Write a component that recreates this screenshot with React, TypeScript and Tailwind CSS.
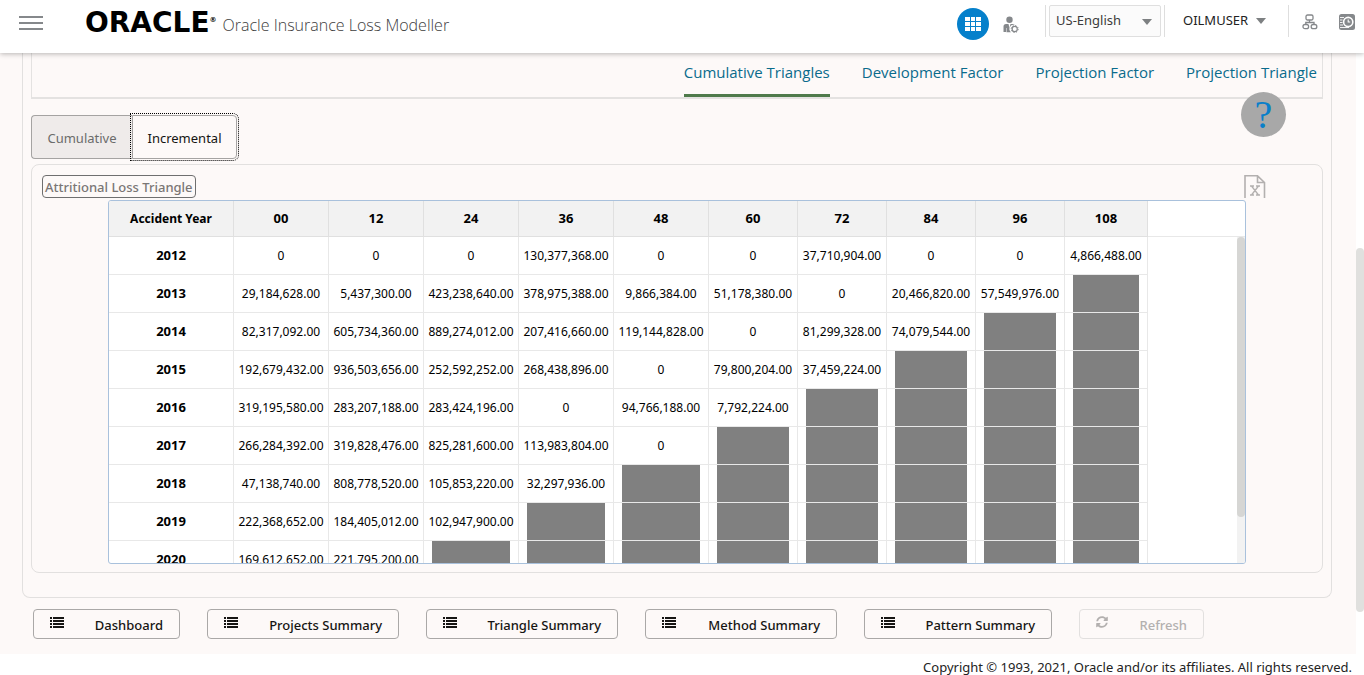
import { FaSyncAlt } from "react-icons/fa";

const tabs = ["Cumulative Triangles", "Development Factor", "Projection Factor", "Projection Triangle"];
const periods = ["00", "12", "24", "36", "48", "60", "72", "84", "96", "108"];

const rows = [
  { year: "2012", values: ["0", "0", "0", "130,377,368.00", "0", "0", "37,710,904.00", "0", "0", "4,866,488.00"] },
  { year: "2013", values: ["29,184,628.00", "5,437,300.00", "423,238,640.00", "378,975,388.00", "9,866,384.00", "51,178,380.00", "0", "20,466,820.00", "57,549,976.00"] },
  { year: "2014", values: ["82,317,092.00", "605,734,360.00", "889,274,012.00", "207,416,660.00", "119,144,828.00", "0", "81,299,328.00", "74,079,544.00"] },
  { year: "2015", values: ["192,679,432.00", "936,503,656.00", "252,592,252.00", "268,438,896.00", "0", "79,800,204.00", "37,459,224.00"] },
  { year: "2016", values: ["319,195,580.00", "283,207,188.00", "283,424,196.00", "0", "94,766,188.00", "7,792,224.00"] },
  { year: "2017", values: ["266,284,392.00", "319,828,476.00", "825,281,600.00", "113,983,804.00", "0"] },
  { year: "2018", values: ["47,138,740.00", "808,778,520.00", "105,853,220.00", "32,297,936.00"] },
  { year: "2019", values: ["222,368,652.00", "184,405,012.00", "102,947,900.00"] },
  { year: "2020", values: ["169,612,652.00", "221,795,200.00"] },
];

const actions = [
  { label: "Dashboard", width: "w-[147px]" },
  { label: "Projects Summary", width: "w-[192px]" },
  { label: "Triangle Summary", width: "w-[192px]" },
  { label: "Method Summary", width: "w-[192px]" },
  { label: "Pattern Summary", width: "w-[188px]" },
];

function Caret() {
  return (
    <svg width="10" height="6" viewBox="0 0 10 6" fill="#7d8082">
      <path d="M0 0h10L5 6z" />
    </svg>
  );
}

function ListIcon() {
  return (
    <svg width="14" height="11" viewBox="0 0 14 11" fill="#161513" className="mb-1">
      <path d="M0 0h2v2H0zM3 0h11v2H3zM0 3h2v2H0zM3 3h11v2H3zM0 6h2v2H0zM3 6h11v2H3zM0 9h2v2H0zM3 9h11v2H3z" />
    </svg>
  );
}

function UserIcon() {
  return (
    <svg width="16" height="18" viewBox="0 0 16 18" fill="#85888b">
      <circle cx="6.5" cy="3.7" r="3.2" />
      <path d="M0.5 16V10.5Q0.5 8 3 8H5.5L6.5 12L7.5 8H9.5Q11 8 11.8 9A4.2 4.2 0 0 0 8 16.3H3.5V12H3V16z" />
      <circle cx="11.7" cy="13" r="2.6" fill="none" stroke="#85888b" strokeWidth="1.2" />
      <circle cx="11.7" cy="13" r="3.5" fill="none" stroke="#85888b" strokeWidth="1" strokeDasharray="1.3 1.45" />
    </svg>
  );
}

function NetworkIcon() {
  return (
    <svg width="16" height="16" viewBox="0 0 16 16" fill="none" stroke="#85888b" strokeWidth="1.3">
      <rect x="4" y="1" width="7" height="5" rx="1.5" />
      <rect x="1" y="10.5" width="5.6" height="4.2" rx="2" />
      <rect x="9.2" y="10.5" width="5.6" height="4.2" rx="2" />
      <path d="M7.5 6v2.5M3.8 10.5V8.5h8.2V10.5" />
    </svg>
  );
}

function HistoryIcon() {
  return (
    <svg width="16" height="16" viewBox="0 0 16 16">
      <rect x="0" y="0" width="16" height="16" rx="2.5" fill="#85888b" />
      <path d="M1 3.5h4M1 6h2.5M1 8.5h2.5M1 11h3M1 13.5h9" stroke="#fff" strokeWidth="0.9" />
      <circle cx="9.2" cy="8" r="4.6" fill="#85888b" stroke="#fff" strokeWidth="1.6" />
      <path d="M9.2 5.5V8h2" fill="none" stroke="#fff" strokeWidth="1.1" />
    </svg>
  );
}

function Header() {
  return (
    <header className="relative z-10 flex h-[53px] shrink-0 items-start bg-white shadow-[0_1px_5px_rgba(0,0,0,0.28)]">
      <button aria-label="Menu" className="mt-4 ml-[19px] flex h-[14px] w-6 flex-col justify-between">
        <span className="h-[2px] w-full bg-[#85888b]" />
        <span className="h-[2px] w-full bg-[#85888b]" />
        <span className="h-[2px] w-full bg-[#85888b]" />
      </button>
      <div className="ml-[42px] flex h-[46px] items-center font-['DejaVu_Sans'] text-[28px] font-bold text-black">
        ORACLE<sup className="text-[7px]">®</sup>
      </div>
      <h1 className="ml-1.5 flex h-[50px] items-center font-['Open_Sans',sans-serif] text-base font-light text-[#3d3d3d]">Oracle Insurance Loss Modeller</h1>

      <div className="ml-auto flex items-start">
        <button aria-label="Applications" className="mt-2 flex h-8 w-8 items-center justify-center rounded-full bg-[#0580cb]">
          <svg width="16" height="14" viewBox="0 0 16 14" fill="#fff">
            <path d="M0 0h5v4H0zM6 0h4v4H6zM11 0h5v4h-5zM0 5h5v4H0zM6 5h4v4H6zM11 5h5v4h-5zM0 10h5v4H0zM6 10h4v4H6zM11 10h5v4h-5z" />
          </svg>
        </button>
        <button aria-label="User settings" className="mt-4 ml-[14px]">
          <UserIcon />
        </button>
        <div className="mt-[5px] ml-[26px] flex h-8 border-x border-[#dedede] px-[3px]">
          <div className="relative w-[112px]">
            <select aria-label="Language" className="h-8 w-full appearance-none rounded-[2px] border border-[#dfdfdf] bg-[#fbfbfb] pl-[6px] text-[13px] text-[#3c3c3c]">
              <option>US-English</option>
            </select>
            <span className="pointer-events-none absolute top-[14px] right-[9px]">
              <Caret />
            </span>
          </div>
        </div>
        <button className="mt-[5px] ml-[18px] flex h-8 w-[106px] items-center gap-2 border-r border-[#dedede] text-[13px] text-[#222]">
          OILMUSER <Caret />
        </button>
        <button aria-label="Hierarchy" className="mt-[14px] ml-[13px]">
          <NetworkIcon />
        </button>
        <button aria-label="History" className="mt-[14px] mr-[9px] ml-[21px]">
          <HistoryIcon />
        </button>
      </div>
    </header>
  );
}

function TriangleTable() {
  return (
    <div className="mx-[76px] flex h-[364px] justify-between overflow-hidden rounded-[3px] border border-[#a9c1dc] bg-white">
      <table className="h-fit table-fixed border-separate border-spacing-0 text-center text-xs text-black">
        <colgroup>
          <col className="w-[125px]" />
          {periods.map((period, index) => (
            <col key={period} className={index < 5 ? "w-[95px]" : index < 9 ? "w-[89px]" : "w-[83px]"} />
          ))}
        </colgroup>
        <thead>
          <tr className="h-9 bg-[#f2f2f2]">
            <th className="border-r border-b border-[#e0e0e0] p-0">Accident Year</th>
            {periods.map((period) => (
              <th key={period} className="border-r border-b border-[#e0e0e0] p-0 text-[13px]">
                {period}
              </th>
            ))}
          </tr>
        </thead>
        <tbody>
          {rows.map((row) => (
            <tr key={row.year} className="h-[38px]">
              <th className="border-r border-b border-[#e8e8e8] p-0 text-[13px]">{row.year}</th>
              {periods.map((period, index) => (
                <td key={period} className="border-r border-b border-[#e8e8e8] p-0 whitespace-nowrap">
                  {/* periods past the valuation date are blocked out */}
                  {row.values[index] ?? <div className="mx-2 h-[37px] bg-[#808080]" />}
                </td>
              ))}
            </tr>
          ))}
        </tbody>
      </table>
      <div className="flex min-w-0 flex-1 flex-col">
        <div className="h-9 shrink-0 border-b border-[#e8e8e8]" />
        <div className="ml-auto w-2 flex-1 bg-[#f2f2f2]">
          <div className="h-[280px] rounded-full bg-[#d6d6d4]" />
        </div>
      </div>
    </div>
  );
}

export default function App() {
  return (
    <div className="flex h-screen flex-col overflow-hidden bg-white font-['Noto_Sans',sans-serif]">
      <Header />
      <div className="flex min-h-0 flex-1">
        <div className="min-w-0 flex-1">
          <main className="bg-[#fdf9f8] pb-[15px]">
            <section className="mr-6 ml-[22px] rounded-b-lg border-x border-b border-[#e2e0df] px-2 pb-6">
              <nav className="flex h-[46px] justify-end gap-8 border-x border-b-2 border-[#e4e2e1] pr-[5px] font-['Open_Sans',sans-serif]">
                {tabs.map((tab, index) => (
                  <a
                    key={tab}
                    href="#"
                    className={`flex h-11 items-start border-b-3 pt-2 text-[15px] text-[#0a6b8c] ${index === 0 ? "border-[#4f7a4b]" : "border-transparent"}`}
                  >
                    {tab}
                  </a>
                ))}
              </nav>

              <div className="relative mt-4 flex h-11 text-[13px]">
                <button className="w-[101px] rounded-l-[4px] border border-r-0 border-[#a5a3a2] bg-[#efebea] pt-[3px] text-[#6b6b6b]">Cumulative</button>
                <button className="w-[105px] rounded-r-[4px] border border-[#a5a3a2] bg-[#fdf9f8] pt-[3px] text-[#161513] outline-1 outline-offset-1 outline-black outline-dotted">
                  Incremental
                </button>
                <button
                  aria-label="Help"
                  className="absolute -top-[23px] right-[37px] h-[45px] w-[45px] rounded-full bg-[#a8a8a8] font-['Liberation_Serif',serif] text-[40px] leading-[45px] text-[#0a7fc9]"
                >
                  ?
                </button>
              </div>

              <section className="mt-[5px] rounded-lg border border-[#e2e0df] pb-2">
                <div className="flex h-[35px] items-start justify-between pt-[10px] pr-14 pl-[10px]">
                  <h2 className="h-[23px] rounded-[4px] border border-[#6f6f6f] px-[2px] text-[13px] leading-[22px] font-medium text-[#7a7675]">Attritional Loss Triangle</h2>
                  <button aria-label="Export to Excel">
                    <svg width="22" height="23" viewBox="0 0 22 23" fill="none" stroke="#b3b0af" strokeWidth="1.6">
                      <path d="M1 23V0.8H13.5L20.5 7.5V23M13.5 0.8V7.5H20.5" />
                      <path d="M6 11h4M12 11h4M6 20h4M12 20h4M7.5 11l7 9M14.5 11l-7 9" strokeWidth="1.3" />
                    </svg>
                  </button>
                </div>
                <TriangleTable />
              </section>
            </section>

            <div className="mt-[11px] ml-[33px] flex gap-[27px] text-[13px] font-medium">
              {actions.map((action) => (
                <button key={action.label} className={`flex h-[30px] items-center justify-between rounded-[4px] border border-[#aaa8a7] px-4 text-[#161513] ${action.width}`}>
                  <ListIcon />
                  <span className="pt-[3px]">{action.label}</span>
                </button>
              ))}
              <button disabled className="flex h-[30px] w-[125px] items-center justify-between rounded-[4px] border border-[#e2e0df] px-4 text-[#b3b0af]">
                <FaSyncAlt size={12} className="mb-1" />
                <span className="pt-[3px]">Refresh</span>
              </button>
            </div>
          </main>
          <footer className="pt-[5px] pr-1 text-right text-[13px] leading-4 text-[#222]">Copyright © 1993, 2021, Oracle and/or its affiliates. All rights reserved.</footer>
        </div>
        <div className="w-2 shrink-0 pt-[195px]">
          <div className="h-[364px] rounded-full bg-[#e0e0de]" />
        </div>
      </div>
    </div>
  );
}
